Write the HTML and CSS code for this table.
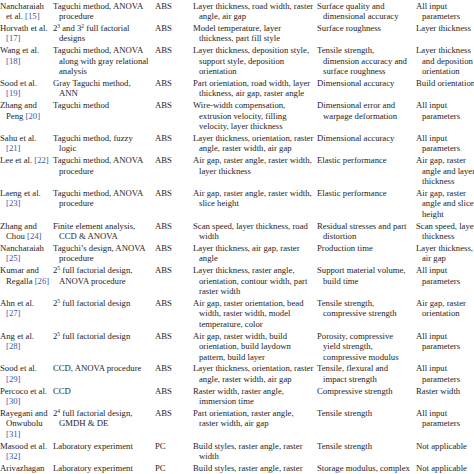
FILE: index.html
```html
<!DOCTYPE html>
<html lang="en">
<head>
<meta charset="utf-8">
<title>FDM optimisation studies</title>
<link rel="stylesheet" href="styles.css">
</head>
<body>
<table class="studies">
  <colgroup>
    <col class="c-author"><col class="c-method"><col class="c-mat"><col class="c-param"><col class="c-resp"><col class="c-opt">
  </colgroup>
  <tbody>
    <tr>
      <td>Nancharaiah<br>et al. <a class="ref">[15]</a></td>
      <td>Taguchi method, ANOVA<br>procedure</td>
      <td>ABS</td>
      <td>Layer thickness, road width, raster<br>angle, air gap</td>
      <td>Surface quality and<br>dimensional accuracy</td>
      <td>All input<br>parameters</td>
    </tr>
    <tr>
      <td>Horvath et al.<br><a class="ref">[17]</a></td>
      <td>2<sup>3</sup> and 3<sup>2</sup> full factorial<br>designs</td>
      <td>ABS</td>
      <td>Model temperature, layer<br>thickness, part fill style</td>
      <td>Surface roughness</td>
      <td>Layer thickness</td>
    </tr>
    <tr>
      <td>Wang et al.<br><a class="ref">[18]</a></td>
      <td>Taguchi method, ANOVA<br>along with gray relational<br>analysis</td>
      <td>ABS</td>
      <td>Layer thickness, deposition style,<br>support style, deposition<br>orientation</td>
      <td>Tensile strength,<br>dimension accuracy and<br>surface roughness</td>
      <td>Layer thickness<br>and deposition<br>orientation</td>
    </tr>
    <tr>
      <td>Sood et al.<br><a class="ref">[19]</a></td>
      <td>Gray Taguchi method,<br>ANN</td>
      <td>ABS</td>
      <td>Part orientation, road width, layer<br>thickness, air gap, raster angle</td>
      <td>Dimensional accuracy</td>
      <td>Build orientation</td>
    </tr>
    <tr>
      <td>Zhang and<br>Peng <a class="ref">[20]</a></td>
      <td>Taguchi method</td>
      <td>ABS</td>
      <td>Wire-width compensation,<br>extrusion velocity, filling<br>velocity, layer thickness</td>
      <td>Dimensional error and<br>warpage deformation</td>
      <td>All input<br>parameters</td>
    </tr>
    <tr>
      <td>Sahu et al.<br><a class="ref">[21]</a></td>
      <td>Taguchi method, fuzzy<br>logic</td>
      <td>ABS</td>
      <td>Layer thickness, orientation, raster<br>angle, raster width, air gap</td>
      <td>Dimensional accuracy</td>
      <td>All input<br>parameters</td>
    </tr>
    <tr>
      <td>Lee et al. <a class="ref">[22]</a></td>
      <td>Taguchi method, ANOVA<br>procedure</td>
      <td>ABS</td>
      <td>Air gap, raster angle, raster width,<br>layer thickness</td>
      <td>Elastic performance</td>
      <td>Air gap, raster<br>angle and layer<br>thickness</td>
    </tr>
    <tr>
      <td>Laeng et al.<br><a class="ref">[23]</a></td>
      <td>Taguchi method, ANOVA<br>procedure</td>
      <td>ABS</td>
      <td>Air gap, raster angle, raster width,<br>slice height</td>
      <td>Elastic performance</td>
      <td>Air gap, raster<br>angle and slice<br>height</td>
    </tr>
    <tr>
      <td>Zhang and<br>Chou <a class="ref">[24]</a></td>
      <td>Finite element analysis,<br>CCD &amp; ANOVA</td>
      <td>ABS</td>
      <td>Scan speed, layer thickness, road<br>width</td>
      <td>Residual stresses and part<br>distortion</td>
      <td>Scan speed, layer<br>thickness</td>
    </tr>
    <tr>
      <td>Nancharaiah<br><a class="ref">[25]</a></td>
      <td>Taguchi’s design, ANOVA<br>procedure</td>
      <td>ABS</td>
      <td>Layer thickness, air gap, raster<br>angle</td>
      <td>Production time</td>
      <td>Layer thickness,<br>air gap</td>
    </tr>
    <tr>
      <td>Kumar and<br>Regalla <a class="ref">[26]</a></td>
      <td>2<sup>5</sup> full factorial design,<br>ANOVA procedure</td>
      <td>ABS</td>
      <td>Layer thickness, raster angle,<br>orientation, contour width, part<br>raster width</td>
      <td>Support material volume,<br>build time</td>
      <td>All input<br>parameters</td>
    </tr>
    <tr>
      <td>Ahn et al.<br><a class="ref">[27]</a></td>
      <td>2<sup>5</sup> full factorial design</td>
      <td>ABS</td>
      <td>Air gap, raster orientation, bead<br>width, raster width, model<br>temperature, color</td>
      <td>Tensile strength,<br>compressive strength</td>
      <td>Air gap, raster<br>orientation</td>
    </tr>
    <tr>
      <td>Ang et al.<br><a class="ref">[28]</a></td>
      <td>2<sup>5</sup> full factorial design</td>
      <td>ABS</td>
      <td>Air gap, raster width, build<br>orientation, build laydown<br>pattern, build layer</td>
      <td>Porosity, compressive<br>yield strength,<br>compressive modulus</td>
      <td>All input<br>parameters</td>
    </tr>
    <tr>
      <td>Sood et al.<br><a class="ref">[29]</a></td>
      <td>CCD, ANOVA procedure</td>
      <td>ABS</td>
      <td>Layer thickness, orientation, raster<br>angle, raster width, air gap</td>
      <td>Tensile, flexural and<br>impact strength</td>
      <td>All input<br>parameters</td>
    </tr>
    <tr>
      <td>Percoco et al.<br><a class="ref">[30]</a></td>
      <td>CCD</td>
      <td>ABS</td>
      <td>Raster width, raster angle,<br>immersion time</td>
      <td>Compressive strength</td>
      <td>Raster width</td>
    </tr>
    <tr>
      <td>Rayegani and<br>Onwubolu<br><a class="ref">[31]</a></td>
      <td>2<sup>4</sup> full factorial design,<br>GMDH &amp; DE</td>
      <td>ABS</td>
      <td>Part orientation, raster angle,<br>raster width, air gap</td>
      <td>Tensile strength</td>
      <td>All input<br>parameters</td>
    </tr>
    <tr>
      <td>Masood et al.<br><a class="ref">[32]</a></td>
      <td>Laboratory experiment</td>
      <td>PC</td>
      <td>Build styles, raster angle, raster<br>width</td>
      <td>Tensile strength</td>
      <td>Not applicable</td>
    </tr>
    <tr>
      <td>Arivazhagan<br>et al. <a class="ref">[33]</a></td>
      <td>Laboratory experiment</td>
      <td>PC</td>
      <td>Build styles, raster angle, raster<br>width</td>
      <td>Storage modulus, complex<br>viscosity, loss modulus</td>
      <td>Not applicable</td>
    </tr>
  </tbody>
</table>
</body>
</html>
```

FILE: styles.css
```css
html, body {
  margin: 0;
  padding: 0;
  background: #ffffff;
}

body {
  width: 474px;
  height: 474px;
  overflow: hidden;
  font-family: "Liberation Serif", "Times New Roman", serif;
  font-size: 8.7px;
  line-height: 10.4px;
  color: #1e1e1e;
}

.studies {
  border-collapse: collapse;
  table-layout: fixed;
  width: 474px;
  margin-top: 0.5px;
}

.c-author { width: 53px; }
.c-method { width: 102px; }
.c-mat { width: 38px; }
.c-param { width: 124px; }
.c-resp { width: 99px; }
.c-opt { width: 58px; }

.studies td {
  vertical-align: top;
  padding: 0 0 1.5px 6px;
  text-indent: -6px;
  white-space: nowrap;
  overflow: visible;
}

.ref {
  color: #3c57a8;
  text-decoration: none;
}

sup {
  font-size: 5.5px;
  line-height: 0;
  vertical-align: 3.5px;
}
```
